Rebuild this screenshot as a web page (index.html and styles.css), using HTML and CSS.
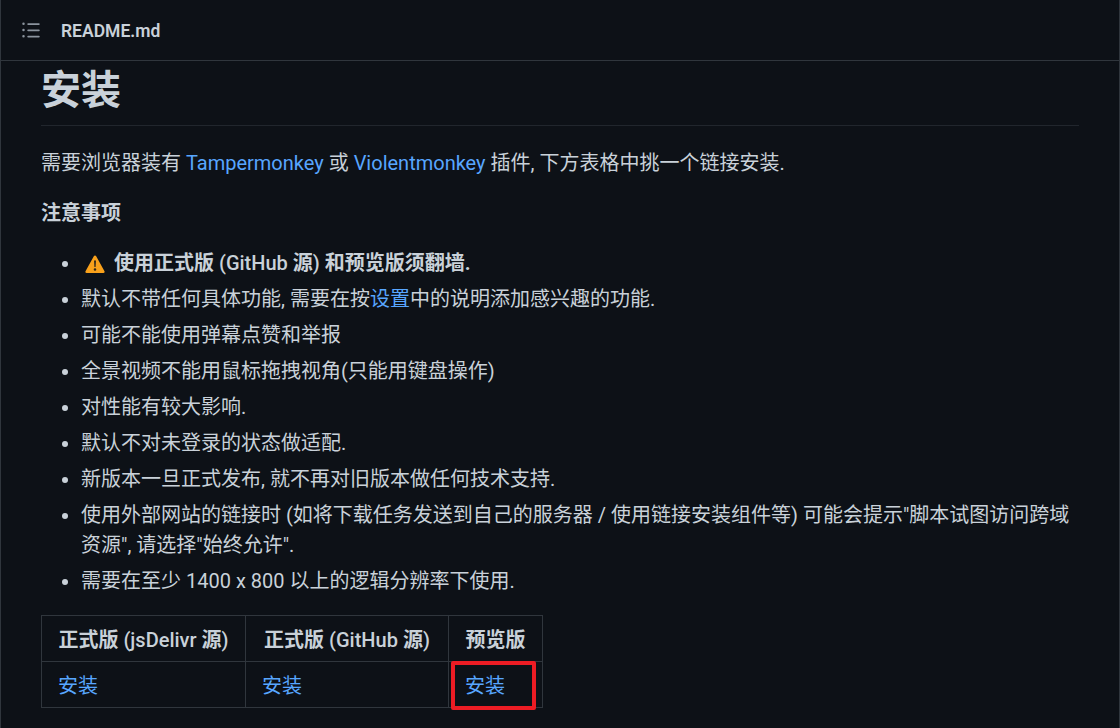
FILE: index.html
```html
<!DOCTYPE html>
<html lang="zh-CN">
<head>
<meta charset="utf-8">
<title>README.md</title>
<link rel="stylesheet" href="styles.css">
</head>
<body>
<div class="box">
  <header class="box-header">
    <svg class="toc-icon" viewBox="0 0 16 16" width="20" height="20" aria-hidden="true"><path fill="currentColor" d="M5.750 2.500h8.500a.75.75 0 0 1 0 1.500h-8.500a.75.75 0 0 1 0-1.500Zm0 5h8.500a.75.75 0 0 1 0 1.500h-8.500a.75.75 0 0 1 0-1.500Zm0 5h8.500a.75.75 0 0 1 0 1.500h-8.500a.75.75 0 0 1 0-1.500ZM2 14a1 1 0 1 1 0-2 1 1 0 0 1 0 2Zm1-6a1 1 0 1 1-2 0 1 1 0 0 1 2 0ZM2 4a1 1 0 1 1 0-2 1 1 0 0 1 0 2Z"/></svg>
    <span class="file-name">README.md</span>
  </header>
  <article class="markdown">
    <h1>安装</h1>
    <p class="intro">需要浏览器装有 <a href="#">Tampermonkey</a> 或 <a href="#">Violentmonkey</a> 插件, 下方表格中挑一个链接安装.</p>
    <p class="notice"><strong>注意事项</strong></p>
    <ul>
      <li><svg class="warn" viewBox="0 0 20 20" width="20" height="20" aria-hidden="true"><path fill="#f9a11b" d="M10 1.500c.5 0 .9.3 1.200.8l8.300 15c.4.8-.1 1.700-1 1.700H1.500c-.9 0-1.400-.9-1-1.700l8.300-15c.3-.5.700-.8 1.200-.8Z"/><path fill="#32291c" d="M9 6.500h2l-.4 6.500H9.400ZM10 14.200a1.300 1.300 0 1 1 0 2.600 1.300 1.300 0 0 1 0-2.600Z"/></svg> <strong>使用正式版 <span class="regular">(GitHub</span> 源<span class="regular">)</span> 和预览版须翻墙.</strong></li>
      <li>默认不带任何具体功能, 需要在按<a href="#">设置</a>中的说明添加感兴趣的功能.</li>
      <li>可能不能使用弹幕点赞和举报</li>
      <li>全景视频不能用鼠标拖拽视角(只能用键盘操作)</li>
      <li>对性能有较大影响.</li>
      <li>默认不对未登录的状态做适配.</li>
      <li>新版本一旦正式发布, 就不再对旧版本做任何技术支持.</li>
      <li>使用外部网站的链接时 (如将下载任务发送到自己的服务器 / 使用链接安装组件等) 可能会提示"脚本试图访问跨域资源", 请选择"始终允许".</li>
      <li>需要在至少 1400 x 800 以上的逻辑分辨率下使用.</li>
    </ul>
    <table>
      <thead>
        <tr><th class="col-a">正式版 <span class="regular">(jsDelivr</span> 源<span class="regular">)</span></th><th class="col-b">正式版 <span class="regular">(GitHub</span> 源<span class="regular">)</span></th><th class="col-c">预览版</th></tr>
      </thead>
      <tbody>
        <tr><td><a href="#">安装</a></td><td><a href="#">安装</a></td><td class="marked"><a href="#">安装</a><span class="red-box"></span></td></tr>
      </tbody>
    </table>
  </article>
</div>
</body>
</html>
```
FILE: styles.css
```css
* { box-sizing: border-box; }
html, body { margin: 0; height: 100%; }
body {
  background: #0d1117;
  color: #c9d1d9;
  font-family: Roboto, "Noto Sans CJK SC", sans-serif;
  font-size: 20px;
  overflow: hidden;
}
.box {
  height: 728px;
  overflow: hidden;
  border-left: 1px solid #30363d;
  border-right: 1px solid #30363d;
}
.box-header {
  height: 61px;
  display: flex;
  align-items: center;
  gap: 20px;
  padding-left: 20px;
  border-bottom: 1px solid #30363d;
}
.toc-icon { color: #8b949e; flex: none; }
.file-name { font-size: 17.500px; font-weight: 600; padding-top: 2px; }
.markdown { padding: 0 40px; line-height: 30px; }
h1 {
  margin: 0 0 22px;
  height: 65px;
  padding-top: 5px;
  font-size: 40px;
  line-height: 50px;
  font-weight: 700;
  border-bottom: 1px solid #21262d;
}
p { margin: 0; }
.intro { margin-bottom: 20px; }
a { color: #58a6ff; text-decoration: none; }
strong { font-weight: 700; }
.regular { font-weight: 500; }
ul { margin: 20px 0 19px; padding-left: 40px; }
li { margin-top: 6px; }
li:first-child { margin-top: 0; }
.warn { vertical-align: -4px; margin: 0 4px 0 4px; }
table { border-collapse: collapse; table-layout: fixed; width: 501px; }
th, td {
  border: 1px solid #30363d;
  height: 46px;
  padding: 2px 16px 0;
  font-size: 20px;
  line-height: 30px;
}
th { font-weight: 700; text-align: center; white-space: nowrap; }
.col-a { width: 204px; }
.col-b { width: 203px; }
.col-c { width: 94px; }
.marked { position: relative; }
.red-box {
  position: absolute;
  left: 2px;
  top: -1px;
  width: 85px;
  height: 49px;
  border: 4px solid #ed1c24;
  border-radius: 2px;
}
```
